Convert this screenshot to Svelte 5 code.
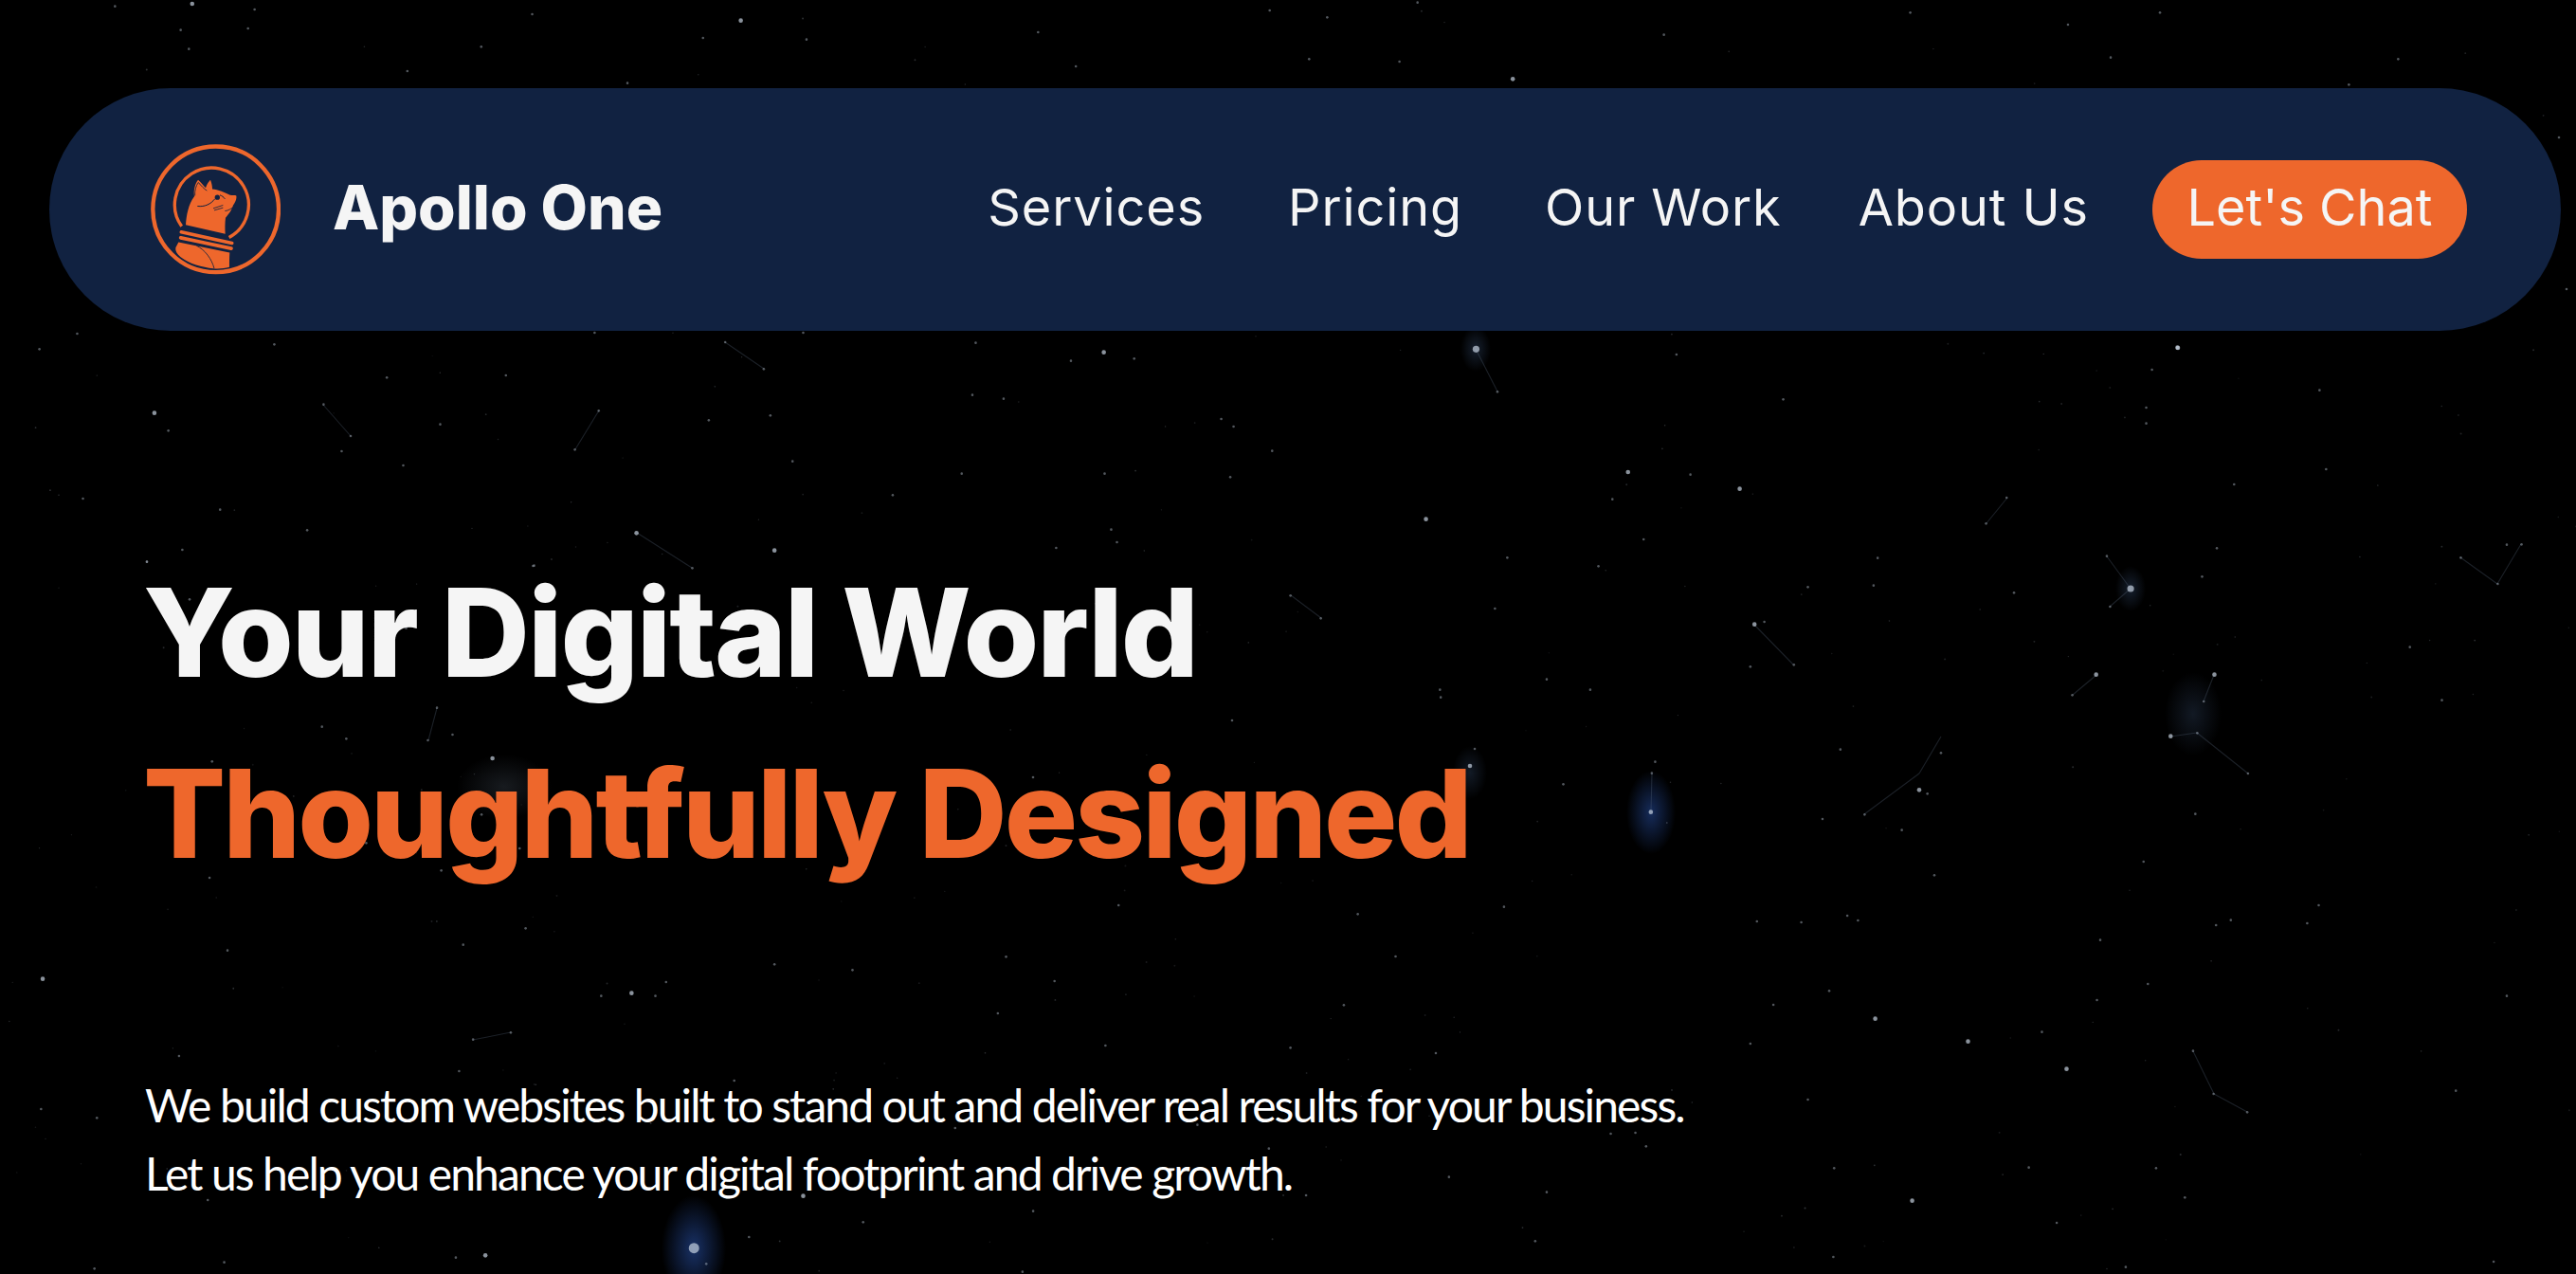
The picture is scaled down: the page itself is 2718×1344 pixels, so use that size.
<script lang="ts">
	type Star = { x: number; y: number; r: number; o: number };

	const navLinks = ['Services', 'Pricing', 'Our Work', 'About Us'];

	// star positions read from crops of the sky: [offset x, offset y, scale x, scale y, points]
	const crops: [number, number, number, number, number[][]][] = [
		[0, 350, 1.154, 3, [[94,6],[48,55],[334,40],[724,3],[978,3],[883,33],[1188,35],[1344,65,2],[1381,85],[1304,92],[930,118],[616,138],[471,145],[188,257,2],[205,313],[536,293],[394,230],[427,330],[729,250],[700,373],[416,378],[491,423],[965,410],[1171,449],[1345,449],[1087,517],[101,528],[268,563],[374,628],[222,690],[179,728],[649,741],[775,637,2],[843,748],[943,692,2],[1353,626],[1360,666],[1286,684],[1487,276],[1502,300],[1549,377],[1498,460],[1184,200],[1222,212],[863,280],[938,265]]],
		[1359, 350, 1.154, 3, [[229,55,3],[255,190],[473,72],[603,214],[1083,50,2],[1052,120],[1256,185],[1045,240],[1045,290],[414,444,2],[550,497,2],[490,452],[395,530],[168,593,2],[433,657],[850,607],[875,525],[1264,435],[1152,483],[267,715],[378,742],[718,716],[713,803],[633,808],[1131,685],[997,710],[1113,775],[1026,813,3],[1001,870],[1473,798],[1428,715],[1484,674],[1502,673],[884,826],[252,876],[3,835],[40,907],[568,926,2],[580,918],[616,1054],[563,1060],[1366,998],[984,1085,2],[955,1150],[1128,1085,2],[1115,1170],[315,1100],[368,1133],[185,1133],[186,1157],[1405,1166]]],
		[1359, 900, 1.154, 3, [[787,70],[263,170],[85,193],[131,327],[571,216],[625,219],[681,198],[694,213],[1130,228],[1148,212],[1255,165],[1241,222],[989,275],[1047,414],[985,465],[659,436],[591,480],[715,524,2],[828,596,2],[918,566],[948,683,2],[1102,626],[1127,762],[1168,820],[563,603],[180,633],[633,780],[423,885],[393,888],[436,928],[665,997],[902,995],[1057,997],[196,1025],[22,1083],[315,1073],[760,1100,2],[936,1170],[1092,1090],[301,1228],[664,1278],[1468,1293],[1020,1310],[1422,752],[1484,452],[68,481],[3,616]]],
		[0, 930, 1.154, 3, [[52,308,2],[277,218],[564,200],[640,148],[943,262],[1038,280],[1225,238],[1284,315],[1215,417],[769,353,2],[732,362],[798,362],[811,318],[622,478],[576,500],[1346,519],[1362,75],[218,552],[118,748],[50,720],[894,630],[559,600],[978,995,2],[1051,1078],[845,1160,4],[860,1210],[591,1183,2],[555,1190],[273,1205],[115,1225],[912,1125],[1258,1043],[1458,770],[1545,845],[1245,1235],[253,1008],[1163,780]]],
		[0, 0, 0.577, 3, [[117,12,2],[70,20],[155,30],[151,90],[110,95],[324,45],[451,65,2],[428,120],[491,125],[293,148],[248,225],[382,263],[773,33],[863,8],[808,55],[797,187],[852,195],[921,250,2],[655,210],[1163,40],[1315,40],[1259,78],[1013,110],[1430,268],[1460,187],[1285,182],[632,102],[115,155]]],
		[130, 590, 2.613, 3, [[65,8],[183,127],[268,123],[780,218],[865,470],[548,530],[615,568],[840,573],[908,555],[1018,630,2],[988,808],[670,898],[1093,915],[877,985],[238,1008],[1133,20],[245,640]]],
		[1600, 600, 1.96, 3, [[670,572],[878,583],[833,700,2],[850,712],[720,778],[797,827],[633,792],[278,770,2],[280,647],[287,611],[97,682],[1353,530,2],[1408,520],[1513,648],[1404,776],[1297,927]]],
		[0, 0, 1, 1, [[2700,145],[2708,305],[2298,367,2],[1551,808,2],[1556,790],[1300,760],[1090,820]]]
	];

	const sizes: Record<number, number> = { 1: 1.3, 2: 2.3, 3: 3.6, 4: 5.5 };

	function toStars(): Star[] {
		const out: Star[] = [];
		for (const [ox, oy, sx, sy, pts] of crops) {
			for (const p of pts) {
				const big = p[2] ?? 1;
				out.push({ x: ox + p[0] / sx, y: oy + p[1] / sy, r: sizes[big], o: big === 1 ? 0.42 : 0.7 });
			}
		}
		return out;
	}

	// faint dust so the sky is not empty between the named stars
	function dust(): Star[] {
		let seed = 4021;
		const rnd = () => (seed = (seed * 16807) % 2147483647) / 2147483647;
		return Array.from({ length: 320 }, () => ({
			x: rnd() * 2718,
			y: rnd() * 1344,
			r: 0.6 + rnd() * 0.4,
			o: 0.08 + rnd() * 0.16
		}));
	}

	const stars = [...dust(), ...toStars()];

	const trails = [
		[341,427,370,460], [632,433,607,474], [672,562,730,599], [765,361,806,389],
		[1557,368,1580,413], [1851,659,1892,701], [2248,621,2226,640], [2248,621,2223,587],
		[2635,616,2596,588], [2635,616,2660,574], [2212,712,2187,733], [2336,712,2325,740],
		[2096,552,2118,525], [1362,628,1394,652],
		[2314,1109,2336,1154], [2336,1154,2371,1173],
		[2048,777,2025,816], [2025,816,1967,859], [1743,816,1742,857],
		[2290,777,2318,773], [2318,773,2372,816],
		[499,1097,539,1089], [461,747,452,781]
	];

	const glows = [
		{ x: 1742, y: 857, rx: 26, ry: 44, c: '#1d3a78', o: 0.75 },
		{ x: 732, y: 1317, rx: 34, ry: 56, c: '#1d3a78', o: 0.85 },
		{ x: 2314, y: 753, rx: 30, ry: 44, c: '#1e2a3c', o: 0.6 },
		{ x: 532, y: 830, rx: 50, ry: 34, c: '#2a3038', o: 0.55 },
		{ x: 1557, y: 368, rx: 16, ry: 24, c: '#24344c', o: 0.6 },
		{ x: 2248, y: 621, rx: 16, ry: 24, c: '#24344c', o: 0.6 },
		{ x: 1551, y: 815, rx: 18, ry: 28, c: '#24344c', o: 0.5 }
	];
</script>

<div class="page">
	<svg class="sky" width="2718" height="1344" viewBox="0 0 2718 1344" aria-hidden="true">
		<defs>
			{#each glows as g, i}
				<radialGradient id={'glow' + i}>
					<stop offset="0" stop-color={g.c} stop-opacity={g.o} />
					<stop offset="1" stop-color={g.c} stop-opacity="0" />
				</radialGradient>
			{/each}
		</defs>
		{#each glows as g, i}
			<ellipse cx={g.x} cy={g.y} rx={g.rx} ry={g.ry} fill={'url(#glow' + i + ')'} />
		{/each}
		{#each trails as t}
			<line x1={t[0]} y1={t[1]} x2={t[2]} y2={t[3]} stroke="#56657a" stroke-width="1.1" opacity="0.32" />
		{/each}
		{#each stars as s}
			<circle cx={s.x} cy={s.y} r={s.r} fill="#c4d0de" opacity={s.o} />
		{/each}
	</svg>

	<header class="nav">
		<a class="brand" href="#top">
			<svg class="logo" width="137" height="138" viewBox="117 95 411 413" aria-hidden="true">
				<circle cx="323" cy="301" r="199" fill="none" stroke="#ee672c" stroke-width="13" />
				<path d="M215 355A117 117 0 1 1 365 390" fill="none" stroke="#ee672c" stroke-width="10" />
				<path d="M228 350C230 320 236 285 255 260C252 240 258 218 267 208C276 216 284 226 291 233C295 222 300 214 306 208C310 218 312 228 312 237C330 238 352 248 368 256C376 257 384 256 388 258C390 268 384 280 378 288C374 304 362 318 354 328C352 345 352 362 353 379Z" fill="#ee672c" />
				<path d="M257 258C256 242 260 226 268 216C276 226 286 236 295 242" fill="none" stroke="#112241" stroke-width="2.5" />
				<circle cx="328" cy="263" r="8" fill="#112241" />
				<path d="M265 291C288 294 308 284 320 268M336 256C342 258 348 262 352 268" fill="none" stroke="#112241" stroke-width="3" />
				<path d="M315 298L346 288M318 304L346 296M352 306C362 306 374 298 386 288" fill="none" stroke="#112241" stroke-width="2.5" />
				<path d="M214 373L374 408M212 391L372 425" stroke="#ee672c" stroke-width="11" stroke-linecap="round" fill="none" />
				<path d="M205 405L367 438C366 452 366 470 366 484C350 488 330 490 315 488C280 484 240 474 212 452C200 442 194 432 196 422Z" fill="#ee672c" />
				<path d="M262 416C290 430 310 458 318 488" fill="none" stroke="#112241" stroke-width="2.5" />
			</svg>
			<span class="brand-name">Apollo One</span>
		</a>
		<nav class="links">
			{#each navLinks as link}
				<a class="link" href="#top">{link}</a>
			{/each}
			<a class="cta" href="#top">Let's Chat</a>
		</nav>
	</header>

	<main class="hero">
		<h1>
			<span class="line first">Your Digital World</span>
			<span class="line accent">Thoughtfully Designed</span>
		</h1>
		<p>
			We build custom websites built to stand out and deliver real results for your business.<br />
			Let us help you enhance your digital footprint and drive growth.
		</p>
	</main>
</div>

<style>
	:global(body) {
		margin: 0;
		background: #000;
	}

	.page {
		position: relative;
		width: 2718px;
		height: 1344px;
		overflow: hidden;
		background: #000;
		color: #f5f5f5;
		font-family: Inter, "Liberation Sans", sans-serif;
		padding-top: 93px;
		box-sizing: border-box;
	}

	.sky {
		position: absolute;
		inset: 0;
	}

	.nav {
		position: relative;
		display: flex;
		align-items: center;
		justify-content: space-between;
		width: 2650px;
		height: 256px;
		margin-left: 52px;
		padding: 0 99px 0 107px;
		box-sizing: border-box;
		background: #112241;
		border-radius: 128px;
	}

	a {
		color: inherit;
		text-decoration: none;
	}

	.brand {
		display: flex;
		align-items: center;
		gap: 55px;
	}

	.logo {
		display: block;
	}

	.brand-name {
		font-size: 64px;
		font-weight: 800;
		letter-spacing: 0;
		padding-bottom: 6px;
	}

	.links {
		display: flex;
		align-items: center;
	}

	.link {
		font-size: 54px;
		font-weight: 400;
		letter-spacing: 0.9px;
		padding-bottom: 6px;
	}

	.link:nth-child(1) {
		margin-right: 88px;
	}

	.link:nth-child(2) {
		margin-right: 87px;
	}

	.link:nth-child(3) {
		margin-right: 81px;
	}

	.link:nth-child(4) {
		margin-right: 67px;
	}

	.cta {
		display: flex;
		align-items: center;
		justify-content: center;
		width: 332px;
		height: 104px;
		box-sizing: border-box;
		padding-bottom: 6px;
		border-radius: 52px;
		background: #ee672c;
		font-size: 54px;
		font-weight: 400;
	}

	.hero {
		position: relative;
		padding: 223px 0 0 151px;
	}

	h1 {
		margin: 0;
		font-size: 129px;
		font-weight: 800;
		line-height: 191px;
		letter-spacing: -3px;
	}

	.line {
		display: block;
	}

	.first {
		letter-spacing: -2.1px;
	}

	.accent {
		color: #ee672c;
	}

	p {
		margin: 176px 0 0 2px;
		font-family: Lato, sans-serif;
		font-size: 48px;
		font-weight: 400;
		line-height: 72px;
		color: #fff;
		letter-spacing: -1.9px;
	}
</style>
